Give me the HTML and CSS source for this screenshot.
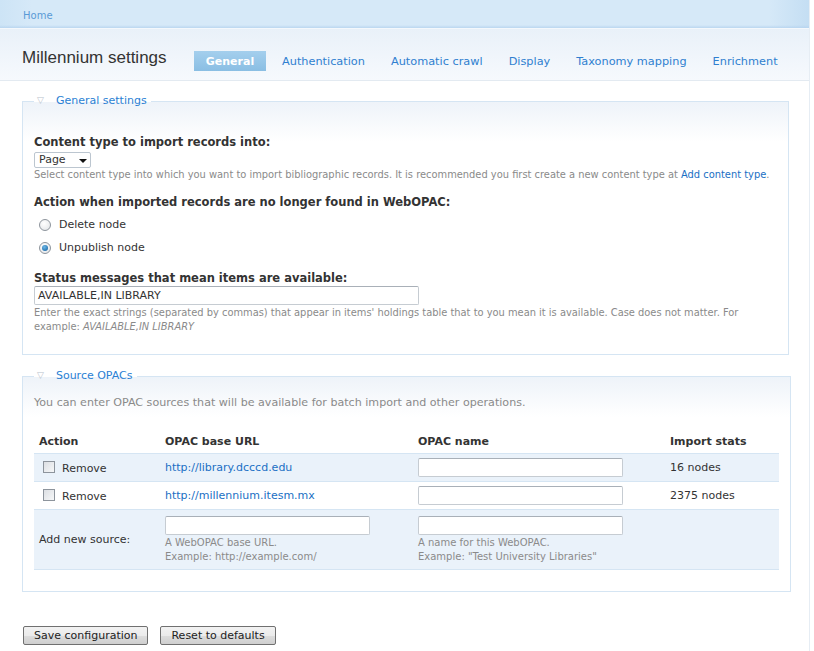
FILE: index.html
```html
<!DOCTYPE html>
<html>
<head>
<meta charset="utf-8">
<link rel="stylesheet" href="styles.css">
</head>
<body>
<div class="page">
  <div class="topbar"><a class="home" href="#">Home</a></div>
  <div class="header">
    <h1 class="title">Millennium settings</h1>
    <ul class="tabs">
      <li class="tab active">General</li>
      <li class="tab">Authentication</li>
      <li class="tab">Automatic crawl</li>
      <li class="tab">Display</li>
      <li class="tab">Taxonomy mapping</li>
      <li class="tab">Enrichment</li>
    </ul>
  </div>
  <div class="content">
    <fieldset class="fs fs-general">
      <legend class="legend"><span class="tri">&#9661;</span>General settings</legend>
      <div class="item item-type">
        <label class="lbl lbl-type">Content type to import records into:</label>
        <div class="select">Page<span class="arrow"></span></div>
        <div class="desc desc-type">Select content type into which you want to import bibliographic records. It is recommended you first create a new content type at <a href="#" class="link">Add content type</a>.</div>
      </div>
      <div class="item item-action">
        <label class="lbl lbl-action">Action when imported records are no longer found in WebOPAC:</label>
        <div class="radio-row"><span class="radio"></span>Delete node</div>
        <div class="radio-row"><span class="radio checked"></span>Unpublish node</div>
      </div>
      <div class="item item-status">
        <label class="lbl lbl-status">Status messages that mean items are available:</label>
        <div class="text-input wide">AVAILABLE,IN LIBRARY</div>
        <div class="desc desc-status"><span>Enter the exact strings (separated by commas) that appear in items' holdings table that to you mean it is available. Case does not matter. For</span> <span>example:</span> <em>AVAILABLE,IN LIBRARY</em></div>
      </div>
    </fieldset>

    <fieldset class="fs fs-source">
      <legend class="legend"><span class="tri">&#9661;</span>Source OPACs</legend>
      <div class="intro">You can enter OPAC sources that will be available for batch import and other operations.</div>
      <table class="opac">
        <thead>
          <tr><th class="c1">Action</th><th class="c2">OPAC base URL</th><th class="c3">OPAC name</th><th class="c4">Import stats</th></tr>
        </thead>
        <tbody>
          <tr class="odd">
            <td><span class="cbox"></span>Remove</td>
            <td><a href="#" class="link">http://library.dcccd.edu</a></td>
            <td><div class="text-input small"></div></td>
            <td>16 nodes</td>
          </tr>
          <tr class="even">
            <td><span class="cbox"></span>Remove</td>
            <td><a href="#" class="link">http://millennium.itesm.mx</a></td>
            <td><div class="text-input small"></div></td>
            <td>2375 nodes</td>
          </tr>
          <tr class="odd add">
            <td>Add new source:</td>
            <td><div class="text-input small"></div><div class="desc cell-desc">A WebOPAC base URL.<br>Example: http://example.com/</div></td>
            <td><div class="text-input small"></div><div class="desc cell-desc">A name for this WebOPAC.<br>Example: "Test University Libraries"</div></td>
            <td></td>
          </tr>
        </tbody>
      </table>
    </fieldset>

    <div class="buttons">
      <button class="btn">Save configuration</button>
      <button class="btn">Reset to defaults</button>
    </div>
  </div>
</div>
</body>
</html>
```

FILE: styles.css
```css
* { box-sizing: border-box; }
html, body { margin: 0; padding: 0; }
body {
  background: #ffffff;
  font-family: "DejaVu Sans", Verdana, sans-serif;
  font-size: 11px;
  color: #333;
  width: 814px;
  height: 651px;
  overflow: hidden;
}
.page { width: 810px; border-right: 1px solid #e6edf4; min-height: 651px; background: #fff; }
.topbar {
  height: 29px;
  background: linear-gradient(to right, #cde4f6 0%, #d6e9f8 4%, #d6e9f8 95%, #c4def3 100%);
  border-bottom: 1px solid #f4f8fc;
  padding: 9px 0 0 23px;
  position: relative;
}
.topbar::after {
  content: ""; position: absolute; left: 0; right: 0; bottom: 0; height: 3px;
  background: linear-gradient(to bottom, rgba(190,216,240,0) 0%, rgba(180,210,238,0.8) 100%);
}
.home { color: #5a9ad6; text-decoration: none; font-size: 10px; }
.header {
  height: 52px;
  background: linear-gradient(to bottom, #e9f1f9 0%, #f6f9fd 100%);
  border-bottom: 1px solid #e3eaf1;
  display: flex;
  align-items: flex-start;
  padding: 19px 0 0 22px;
}
.title {
  margin: 0;
  font-family: "Liberation Sans", Arial, sans-serif;
  font-weight: normal;
  font-size: 17px;
  line-height: 20px;
  color: #333;
  width: 172px;
}
.tabs { list-style: none; margin: 3px 0 0 0; padding: 0; display: flex; }
.tab { font-size: 11.3px; color: #2f7fd0; height: 20px; line-height: 21px; }
.tab + .tab { margin-left: 26px; }
.active + .tab { margin-left: 16px; }
.tab.active {
  background: linear-gradient(to bottom, #a4cfed 0%, #8abee3 100%);
  color: #fff;
  font-weight: bold;
  font-size: 11px;
  width: 72px;
  text-align: center;
}
.content { padding: 13px 20px 0 22px; }
.fs {
  margin: 0;
  border: 1px solid #d5e5f3;
  padding: 0 11px 21px 11px;
  background: linear-gradient(to bottom, #eef3f9 0px, #ffffff 40px);
}
.legend { color: #2a7fd4; font-size: 11px; padding: 0 4px 0 3px; margin-left: 0; line-height: 14px; }
.tri { color: #b9c2cc; font-size: 9px; margin-right: 12px; position: relative; top: -1px; }
.fs-general { padding-top: 27px; padding-bottom: 20px; }
.fs-source { margin-top: 14px; }
.lbl { display: block; font-weight: bold; font-size: 11.5px; line-height: 14px; color: #333; }
.lbl-type { margin-bottom: 3px; }
.lbl-action { margin-bottom: 4px; }
.lbl-status { margin-bottom: 1px; }
.item-type { margin-bottom: 13px; }
.item-action { margin-bottom: 12px; }
.select {
  width: 57px; height: 16px; border: 1px solid #bcc6d0; background: #fff;
  font-size: 11px; line-height: 14px; padding: 0 0 0 4px; position: relative; border-radius: 2px;
}
.arrow {
  position: absolute; right: 3px; top: 6px; width: 0; height: 0;
  border-left: 4px solid transparent; border-right: 4px solid transparent; border-top: 4px solid #111;
}
.desc { color: #8a8a8a; font-size: 9.9px; line-height: 14px; }
.desc-type { margin-top: 0; }
.desc-status { margin-top: 1px; }
.desc em { font-style: italic; }
.link { color: #1a6fc4; text-decoration: none; }
.radio-row { display: flex; align-items: center; height: 23px; padding-left: 5px; font-size: 11px; }
.radio {
  width: 12px; height: 12px; border-radius: 50%; border: 1px solid #8d949c;
  background: radial-gradient(circle at 40% 35%, #ffffff 0%, #e0e3e6 100%);
  margin-right: 8px; position: relative;
}
.radio.checked::after {
  content: ""; position: absolute; left: 2px; top: 2px; width: 6px; height: 6px; border-radius: 50%;
  background: radial-gradient(circle at 40% 35%, #6cb8e8 0%, #0d5a9a 100%);
}
.text-input { border: 1px solid #c6ccd2; border-top-color: #a9b0b8; background: #fff; height: 19px; border-radius: 2px; font-size: 11px; line-height: 15px; padding: 1px 0 0 3px; }
.text-input.wide { width: 385px; }
.text-input.small { width: 205px; }
.intro { margin: 13px 0 25px; font-size: 11.1px; line-height: 14px; color: #8a8a8a; }
.opac { width: 745px; border-collapse: collapse; font-size: 11px; }
.opac th { text-align: left; font-weight: bold; font-size: 11px; line-height: 13px; padding: 0 5px 5px; color: #333; border-bottom: 1px solid #d5e5f3; }
.opac th.c1 { width: 126px; }
.opac th.c2 { width: 253px; }
.opac th.c3 { width: 252px; }
.opac td { padding: 0 5px; height: 28px; border-bottom: 1px solid #d5e5f3; vertical-align: middle; }
.opac tr.odd td { background: #eaf2fa; }
.opac tr.add td { height: 60px; }
.cbox {
  display: inline-block; width: 12px; height: 12px; border: 1px solid #8d949c;
  background: linear-gradient(135deg, #dcdfe3 0%, #f6f7f8 100%); margin: 0 7px 0 4px; vertical-align: -1px;
}
.cell-desc { margin-top: 1px; font-size: 10px; }
.buttons { margin-top: 34px; display: flex; gap: 12px; margin-left: 1px; }
.btn {
  font-family: "DejaVu Sans", Verdana, sans-serif; font-size: 11px; color: #222;
  height: 19px; padding: 0 10px; border: 1px solid #707070; border-radius: 2px;
  background: linear-gradient(to bottom, #f2f2f2 0%, #ebebeb 50%, #dddddd 51%, #cfcfcf 100%);
}
```
